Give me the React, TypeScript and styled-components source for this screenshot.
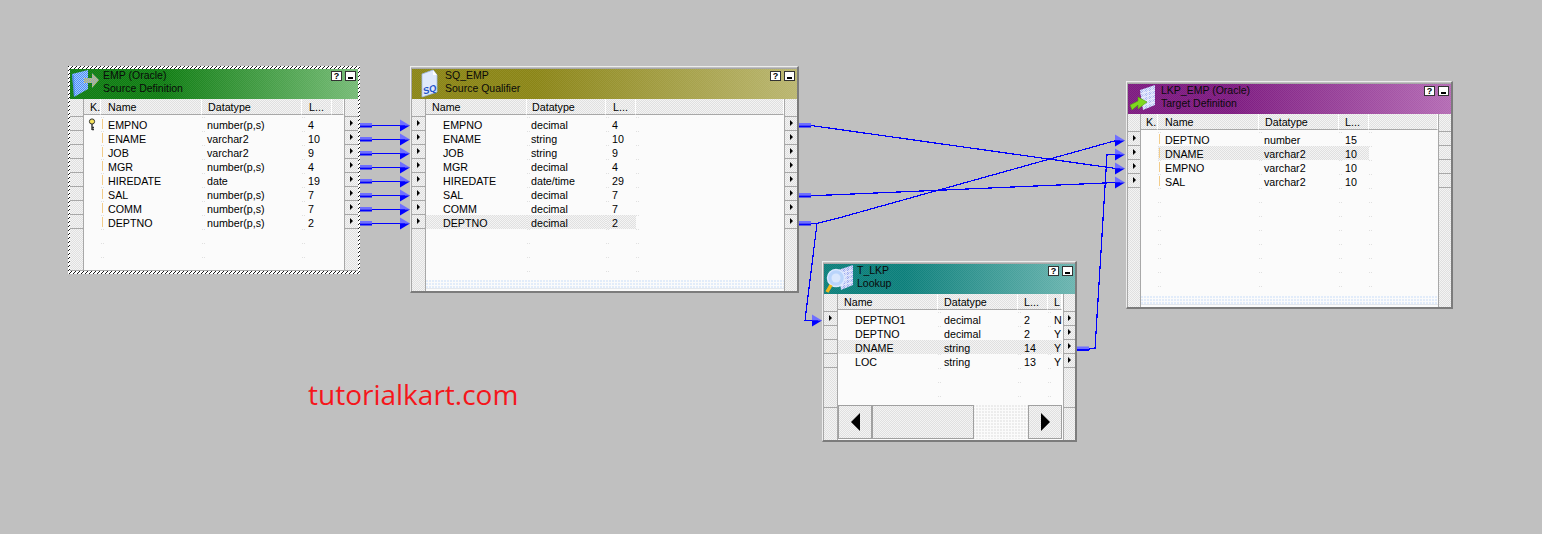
import React from "react";
import styled, { createGlobalStyle, css } from "styled-components";

const Global = createGlobalStyle`
  html, body { margin: 0; padding: 0; background: #c0c0c0; overflow: hidden; }
`;

const dither = css`
  background: repeating-conic-gradient(#f4f4f4 0 25%, #e0e0e0 0 50%) 0 0 / 2px 2px;
`;

const Canvas = styled.div`
  position: relative;
  width: 1542px;
  height: 534px;
  background: #c0c0c0;
  overflow: hidden;
  font-family: "Liberation Sans", Arial, sans-serif;
  font-size: 10.7px;
  color: #000;
`;

const Frame = styled.div<{ $x: number; $y: number; $w: number; $h: number; $hatched?: boolean }>`
  position: absolute;
  left: ${(p) => p.$x}px;
  top: ${(p) => p.$y}px;
  width: ${(p) => p.$w}px;
  height: ${(p) => p.$h}px;
  box-sizing: border-box;
  display: flex;
  ${(p) =>
    p.$hatched
      ? css`
          padding: 3px 2px 3px 2px;
          background: repeating-linear-gradient(135deg, #1a1a1a 0 1.2px, #fff 1.2px 2.83px);
        `
      : css`
          border-style: solid;
          border-width: 1px 2px 2px 1px;
          border-color: #ececec #7c7c7c #7c7c7c #ececec;
          padding-top: 1px;
        `}
`;

const Panel = styled.div<{ $plain?: boolean }>`
  flex: 1;
  min-width: 0;
  display: flex;
  flex-direction: column;
  background: #fbfbfb;
  ${(p) =>
    p.$plain
      ? css`
          border-bottom: 1px solid #a8a8a8;
        `
      : css`
          border-top: 1px solid #a8a8a8;
          border-left: 1px solid #a8a8a8;
        `}
`;

const TitleBar = styled.div<{ $from: string; $to: string }>`
  height: 30px;
  flex: none;
  display: flex;
  background:
    repeating-conic-gradient(rgba(255, 255, 255, 0.07) 0 25%, transparent 0 50%) 0 0 / 2px 2px,
    linear-gradient(90deg, ${(p) => p.$from} 0%, ${(p) => p.$from} 32%, ${(p) => p.$to} 100%);
`;

const IconBox = styled.svg`
  width: 33px;
  height: 30px;
  flex: none;
  display: block;
`;

const TitleText = styled.div`
  flex: 1;
  font-size: 10.5px;
  line-height: 13px;
  color: #0a0a0a;
  white-space: nowrap;
`;

const TitleLine = styled.div``;

const TitleButtons = styled.div`
  display: flex;
  gap: 3px;
  padding: 2px 2px 0 0;
`;

const TitleButton = styled.div`
  position: relative;
  width: 11px;
  height: 10px;
  box-sizing: border-box;
  border: 1px solid #333;
  background: #fff;
  font-size: 9px;
  font-weight: bold;
  line-height: 8px;
  text-align: center;
`;

const MinimizeBar = styled.div`
  position: absolute;
  left: 2px;
  bottom: 1px;
  width: 5px;
  height: 2px;
  background: #000;
`;

const Body = styled.div`
  flex: 1;
  min-height: 0;
  display: flex;
`;

const PortColumn = styled.div<{ $w: number; $side: "left" | "right" }>`
  width: ${(p) => p.$w}px;
  flex: none;
  box-sizing: border-box;
  display: flex;
  flex-direction: column;
  ${dither}
  ${(p) => (p.$side === "left" ? "border-right" : "border-left")}: 1px solid #a8a8a8;
`;

const PortHead = styled.div`
  height: 18px;
  flex: none;
  box-sizing: border-box;
  border-bottom: 1px solid #a8a8a8;
`;

const PortCell = styled.div`
  height: 14px;
  flex: none;
  box-sizing: border-box;
  border-bottom: 1px solid #a8a8a8;
  display: flex;
  align-items: center;
  justify-content: center;
`;

const PortFill = styled.div`
  flex: 1;
`;

const PortFoot = styled.div`
  height: 33px;
  flex: none;
  box-sizing: border-box;
  border-top: 1px solid #a8a8a8;
`;

const PortArrow = styled.div`
  width: 0;
  height: 0;
  margin-top: -1px;
  border-left: 3px solid #000;
  border-top: 3px solid transparent;
  border-bottom: 3px solid transparent;
`;

const Center = styled.div`
  flex: 1;
  min-width: 0;
  display: flex;
  flex-direction: column;
  overflow: hidden;
`;

const HeaderRow = styled.div`
  height: 18px;
  flex: none;
  display: flex;
`;

const HeaderCell = styled.div<{ $w: number; $pad: number }>`
  width: ${(p) => p.$w}px;
  height: 16px;
  flex: none;
  box-sizing: border-box;
  padding-left: ${(p) => p.$pad}px;
  padding-top: 2px;
  line-height: 13px;
  overflow: hidden;
  white-space: nowrap;
  border-right: 1px solid #fff;
  border-bottom: 1px solid #a8a8a8;
  ${dither}
`;

const Rows = styled.div`
  flex: 1;
  min-height: 0;
  overflow: hidden;
`;

const DataRow = styled.div`
  height: 14px;
  display: flex;
`;

const Cell = styled.div<{ $w: number; $pad: number; $hl?: boolean; $tick?: boolean; $nodot?: boolean }>`
  position: relative;
  width: ${(p) => p.$w}px;
  height: 14px;
  flex: none;
  box-sizing: border-box;
  padding-left: ${(p) => p.$pad}px;
  padding-top: 1px;
  line-height: 14px;
  overflow: hidden;
  white-space: nowrap;
  ${(p) => p.$hl && dither}
  ${(p) =>
    !p.$nodot &&
    css`
      &::before {
        content: "";
        position: absolute;
        left: 0;
        top: 0;
        width: 1px;
        height: 1px;
        background: #e0e0e0;
        box-shadow: 2px 0 #e0e0e0;
      }
    `}
  ${(p) =>
    p.$tick &&
    css`
      &::after {
        content: "";
        position: absolute;
        left: 1px;
        top: 2px;
        width: 1px;
        height: 10px;
        background: #f2cc8a;
      }
    `}
`;

const KeyGlyph = styled.svg`
  display: block;
  width: 8px;
  height: 13px;
  margin: 0 0 0 4px;
`;

const Fringe = styled.div`
  height: 8px;
  flex: none;
  margin-bottom: 2px;
  border-bottom: 1px solid #e4e8ee;
  background: radial-gradient(circle at 1px 1px, #e2ecfa 0.8px, transparent 0.9px) 0 0 / 3px 3px;
`;

const ScrollBar = styled.div`
  height: 34px;
  flex: none;
  margin-bottom: 1px;
  display: flex;
  background: radial-gradient(circle at 1px 1px, #ebebeb 0.7px, transparent 0.8px) 0 0 / 3px 3px;
`;

const ScrollPart = styled.div<{ $w: number; $push?: boolean }>`
  width: ${(p) => p.$w}px;
  flex: none;
  box-sizing: border-box;
  border: 1px solid #a0a0a0;
  display: flex;
  align-items: center;
  justify-content: center;
  ${dither}
  ${(p) => p.$push && "margin-left: auto; margin-right: 1px;"}
`;

const ScrollArrow = styled.div<{ $left?: boolean }>`
  width: 0;
  height: 0;
  border-top: 9px solid transparent;
  border-bottom: 9px solid transparent;
  ${(p) => (p.$left ? "border-right: 9px solid #000;" : "border-left: 9px solid #000;")}
`;

const Links = styled.svg`
  position: absolute;
  left: 0;
  top: 0;
  width: 1542px;
  height: 534px;
  pointer-events: none;
`;

const Watermark = styled.div`
  position: absolute;
  left: 308px;
  top: 375px;
  font-family: "Open Sans", sans-serif;
  font-size: 28px;
  line-height: 38px;
  color: #f5161b;
  white-space: nowrap;
`;

type Col = { label: string; w: number; hp: number; cp: number; tick?: boolean; nodot?: boolean };
type Win = {
  id: string;
  x: number;
  y: number;
  w: number;
  h: number;
  hatched?: boolean;
  from: string;
  to: string;
  title: string;
  sub: string;
  icon: React.ReactNode;
  leftW: number;
  rightW: number;
  cols: Col[];
  rows: string[][];
  leftPorts: boolean[];
  rightPorts: boolean[];
  hl?: number;
  hlCols?: number[];
  fringe?: boolean;
  scroll?: boolean;
  keyRow?: number;
};

const Dither = ({ id, a, b }: { id: string; a: string; b: string }) => (
  <pattern id={id} width="2" height="2" patternUnits="userSpaceOnUse">
    <rect width="2" height="2" fill={a} />
    <rect width="1" height="1" fill={b} />
    <rect x="1" y="1" width="1" height="1" fill={b} />
  </pattern>
);

const SourceIcon = () => (
  <IconBox viewBox="0 0 33 30">
    <defs>
      <Dither id="srcBlue" a="#4a90f5" b="#a5c8ff" />
      <Dither id="srcArrow" a="#dccb55" b="#6f9ce8" />
    </defs>
    <polygon points="2,5 18,1 18,20 4,28" fill="url(#srcBlue)" />
    <polygon points="2,5 4,7 5,26 4,28" fill="#3a78e0" opacity="0.6" />
    <polygon points="14,9 22,9 22,4 29,11 22,19 22,14 14,14" fill="url(#srcArrow)" />
  </IconBox>
);

const QualifierIcon = () => (
  <IconBox viewBox="0 0 33 30">
    <polygon points="10,5 21,1 25,6 25,23 10,28" fill="#dfe9fb" stroke="#9fb9ea" strokeWidth="0.8" />
    <polygon points="21,1 21,6 25,6" fill="#ffffff" />
    <text
      x="12"
      y="25.5"
      fontFamily="Liberation Sans, sans-serif"
      fontSize="9.5"
      fontWeight="bold"
      fontStyle="italic"
      fill="#1f55c8"
      transform="rotate(-16 12 25.5)"
    >
      SQ
    </text>
  </IconBox>
);

const TableGrid = ({ x, id }: { x: number; id: string }) => (
  <g>
    <polygon points={`${x},6 ${x + 15},1 ${x + 15},21 ${x + 3},26`} fill={`url(#${id})`} />
    <path
      d={`M${x + 4},5 V25 M${x + 8},4 V24 M${x + 12},2.5 V22 M${x},10 L${x + 15},6 M${x + 1},14 L${x + 15},10 M${x + 1},18 L${x + 15},14 M${x + 2},22 L${x + 15},18`}
      stroke="#f2f5ff"
      strokeWidth="0.8"
      fill="none"
    />
  </g>
);

const LookupIcon = () => (
  <IconBox viewBox="0 0 33 30">
    <defs>
      <Dither id="lkTable" a="#9aa8ec" b="#d3dafa" />
    </defs>
    <TableGrid x={14} id="lkTable" />
    <circle cx="12" cy="14" r="8.5" fill="#b9d4fb" stroke="#dbe8ff" strokeWidth="1.5" />
    <circle cx="12" cy="14" r="4.5" fill="#d9e7fd" />
    <line x1="7" y1="21" x2="3" y2="28" stroke="#f0b91e" strokeWidth="3.5" />
  </IconBox>
);

const TargetIcon = () => (
  <IconBox viewBox="0 0 33 30">
    <defs>
      <Dither id="tgTable" a="#a8b4f0" b="#dde3fc" />
    </defs>
    <TableGrid x={12} id="tgTable" />
    <polygon points="2,21 10,17 10,13 19,18 10,25 10,21 4,26" fill="#7fd81f" stroke="#4f9c0c" strokeWidth="0.6" />
  </IconBox>
);

const range = (n: number) => Array.from({ length: n }, (_, i) => i);

const windows: Win[] = [
  {
    id: "emp",
    x: 68,
    y: 66,
    w: 292,
    h: 208,
    hatched: true,
    from: "#0f7d12",
    to: "#76bb76",
    title: "EMP (Oracle)",
    sub: "Source Definition",
    icon: <SourceIcon />,
    leftW: 14,
    rightW: 14,
    cols: [
      { label: "K.", w: 17, hp: 6, cp: 0, nodot: true },
      { label: "Name", w: 101, hp: 7, cp: 7, tick: true },
      { label: "Datatype", w: 100, hp: 6, cp: 5 },
      { label: "L...", w: 30, hp: 7, cp: 6 },
      { label: "", w: 12, hp: 0, cp: 0, nodot: true },
    ],
    rows: [
      ["", "EMPNO", "number(p,s)", "4", ""],
      ["", "ENAME", "varchar2", "10", ""],
      ["", "JOB", "varchar2", "9", ""],
      ["", "MGR", "number(p,s)", "4", ""],
      ["", "HIREDATE", "date", "19", ""],
      ["", "SAL", "number(p,s)", "7", ""],
      ["", "COMM", "number(p,s)", "7", ""],
      ["", "DEPTNO", "number(p,s)", "2", ""],
    ],
    leftPorts: range(8).map(() => false),
    rightPorts: range(8).map(() => true),
    keyRow: 0,
  },
  {
    id: "sq",
    x: 410,
    y: 66,
    w: 389,
    h: 227,
    from: "#8b8516",
    to: "#bab670",
    title: "SQ_EMP",
    sub: "Source Qualifier",
    icon: <QualifierIcon />,
    leftW: 14,
    rightW: 13,
    cols: [
      { label: "Name", w: 101, hp: 6, cp: 17, nodot: true },
      { label: "Datatype", w: 79, hp: 5, cp: 4 },
      { label: "L...", w: 30, hp: 7, cp: 6 },
      { label: "", w: 148, hp: 0, cp: 0 },
    ],
    rows: [
      ["EMPNO", "decimal", "4", ""],
      ["ENAME", "string", "10", ""],
      ["JOB", "string", "9", ""],
      ["MGR", "decimal", "4", ""],
      ["HIREDATE", "date/time", "29", ""],
      ["SAL", "decimal", "7", ""],
      ["COMM", "decimal", "7", ""],
      ["DEPTNO", "decimal", "2", ""],
    ],
    leftPorts: range(8).map(() => true),
    rightPorts: range(8).map(() => true),
    hl: 7,
    hlCols: [0, 1, 2],
    fringe: true,
  },
  {
    id: "lkp",
    x: 822,
    y: 261,
    w: 255,
    h: 181,
    from: "#0c7f7b",
    to: "#6cb5b0",
    title: "T_LKP",
    sub: "Lookup",
    icon: <LookupIcon />,
    leftW: 14,
    rightW: 12,
    cols: [
      { label: "Name", w: 100, hp: 6, cp: 17, nodot: true },
      { label: "Datatype", w: 80, hp: 6, cp: 6 },
      { label: "L...", w: 30, hp: 6, cp: 6 },
      { label: "L", w: 14, hp: 6, cp: 6 },
    ],
    rows: [
      ["DEPTNO1", "decimal", "2", "N"],
      ["DEPTNO", "decimal", "2", "Y"],
      ["DNAME", "string", "14", "Y"],
      ["LOC", "string", "13", "Y"],
    ],
    leftPorts: [true, false, false, false],
    rightPorts: [true, true, true, true],
    hl: 2,
    hlCols: [0, 1, 2, 3],
    scroll: true,
  },
  {
    id: "tgt",
    x: 1126,
    y: 81,
    w: 327,
    h: 228,
    from: "#7d1a80",
    to: "#b46bb4",
    title: "LKP_EMP (Oracle)",
    sub: "Target Definition",
    icon: <TargetIcon />,
    leftW: 13,
    rightW: 13,
    cols: [
      { label: "K.", w: 17, hp: 5, cp: 0, nodot: true },
      { label: "Name", w: 101, hp: 7, cp: 7, tick: true },
      { label: "Datatype", w: 80, hp: 6, cp: 5 },
      { label: "L...", w: 30, hp: 6, cp: 6 },
      { label: "", w: 69, hp: 0, cp: 0 },
    ],
    rows: [
      ["", "DEPTNO", "number", "15", ""],
      ["", "DNAME", "varchar2", "10", ""],
      ["", "EMPNO", "varchar2", "10", ""],
      ["", "SAL", "varchar2", "10", ""],
    ],
    leftPorts: [true, true, true, true],
    rightPorts: [false, false, false, false],
    hl: 1,
    hlCols: [1, 2, 3],
    fringe: true,
  },
];

const Ports = ({ w, side, flags, foot }: { w: number; side: "left" | "right"; flags: boolean[]; foot?: boolean }) => (
  <PortColumn $w={w} $side={side}>
    <PortHead />
    {flags.map((on, i) => (
      <PortCell key={i}>{on && <PortArrow />}</PortCell>
    ))}
    <PortFill />
    {foot && <PortFoot />}
  </PortColumn>
);

const Key = () => (
  <KeyGlyph viewBox="0 0 8 13">
    <circle cx="4" cy="3.5" r="2.6" fill="#f6e25a" stroke="#333" strokeWidth="1" />
    <path d="M4 6 V12 M4 9.5 H6 M4 11.5 H6" stroke="#333" strokeWidth="1.4" fill="none" />
  </KeyGlyph>
);

const Window = ({ win }: { win: Win }) => {
  const empties = range(14);
  return (
    <Frame $x={win.x} $y={win.y} $w={win.w} $h={win.h} $hatched={win.hatched}>
      <Panel $plain={win.hatched}>
        <TitleBar $from={win.from} $to={win.to}>
          {win.icon}
          <TitleText>
            <TitleLine>{win.title}</TitleLine>
            <TitleLine>{win.sub}</TitleLine>
          </TitleText>
          <TitleButtons>
            <TitleButton>?</TitleButton>
            <TitleButton>
              <MinimizeBar />
            </TitleButton>
          </TitleButtons>
        </TitleBar>
        <Body>
          <Ports w={win.leftW} side="left" flags={win.leftPorts} foot={win.scroll} />
          <Center>
            <HeaderRow>
              {win.cols.map((c, i) => (
                <HeaderCell key={i} $w={c.w} $pad={c.hp}>
                  {c.label}
                </HeaderCell>
              ))}
            </HeaderRow>
            <Rows>
              {win.rows.map((r, ri) => (
                <DataRow key={ri}>
                  {win.cols.map((c, ci) => (
                    <Cell
                      key={ci}
                      $w={c.w}
                      $pad={c.cp}
                      $tick={c.tick}
                      $nodot={c.nodot}
                      $hl={win.hl === ri && win.hlCols?.includes(ci)}
                    >
                      {win.keyRow === ri && ci === 0 ? <Key /> : r[ci]}
                    </Cell>
                  ))}
                </DataRow>
              ))}
              {empties.map((e) => (
                <DataRow key={`e${e}`}>
                  {win.cols.map((c, ci) => (
                    <Cell key={ci} $w={c.w} $pad={0} $nodot={c.nodot} />
                  ))}
                </DataRow>
              ))}
            </Rows>
            {win.fringe && <Fringe />}
            {win.scroll && (
              <ScrollBar>
                <ScrollPart $w={34}>
                  <ScrollArrow $left />
                </ScrollPart>
                <ScrollPart $w={102} />
                <ScrollPart $w={34} $push>
                  <ScrollArrow />
                </ScrollPart>
              </ScrollBar>
            )}
          </Center>
          <Ports w={win.rightW} side="right" flags={win.rightPorts} foot={win.scroll} />
        </Body>
      </Panel>
    </Frame>
  );
};

const BLUE = "#0000ff";
const LIGHT = "#6f6fff";

const Stub = ({ x, y }: { x: number; y: number }) => (
  <g>
    <rect x={x} y={y - 2.5} width={12} height={2.5} fill={LIGHT} />
    <rect x={x} y={y} width={12} height={2} fill={BLUE} />
  </g>
);

const Head = ({ x, y }: { x: number; y: number }) => (
  <g>
    <polygon points={`${x - 10},${y - 6} ${x},${y} ${x - 10},${y}`} fill={LIGHT} />
    <polygon points={`${x - 10},${y + 6} ${x},${y} ${x - 10},${y}`} fill={BLUE} />
  </g>
);

const rowYs = range(8).map((i) => 125.5 + i * 14);

type Link = { pts: number[][]; stub: number[]; head: number[] };

const links: Link[] = [
  ...rowYs.map((y) => ({ pts: [[372, y], [405, y]], stub: [360, y], head: [410, y] })),
  { pts: [[811, 125.5], [1116, 168.5], [1120, 168.5]], stub: [799, 125.5], head: [1125, 168.5] },
  { pts: [[811, 195.5], [830, 195], [1116, 182.5], [1120, 182.5]], stub: [799, 195.5], head: [1125, 182.5] },
  { pts: [[811, 223.5], [817, 223.5], [835, 219], [1116, 140.5], [1120, 140.5]], stub: [799, 223.5], head: [1125, 140.5] },
  { pts: [[1089, 349], [1095, 348.5], [1107, 154.5], [1120, 154.5]], stub: [1077, 349], head: [1125, 154.5] },
];

const Connectors = () => (
  <Links viewBox="0 0 1542 534">
    {links.map((l, i) => (
      <g key={i}>
        <polyline
          points={l.pts.map((p) => p.join(",")).join(" ")}
          fill="none"
          stroke={BLUE}
          strokeWidth="1.2"
          shapeRendering="crispEdges"
        />
        <Stub x={l.stub[0]} y={l.stub[1]} />
        <Head x={l.head[0]} y={l.head[1]} />
      </g>
    ))}
    <polyline
      points="817,223.5 805,320.5 818,320.5"
      fill="none"
      stroke={BLUE}
      strokeWidth="1.2"
      shapeRendering="crispEdges"
    />
    <Head x={822} y={320.5} />
  </Links>
);

export default function App() {
  return (
    <Canvas>
      <Global />
      {windows.map((w) => (
        <Window key={w.id} win={w} />
      ))}
      <Connectors />
      <Watermark>tutorialkart.com</Watermark>
    </Canvas>
  );
}
